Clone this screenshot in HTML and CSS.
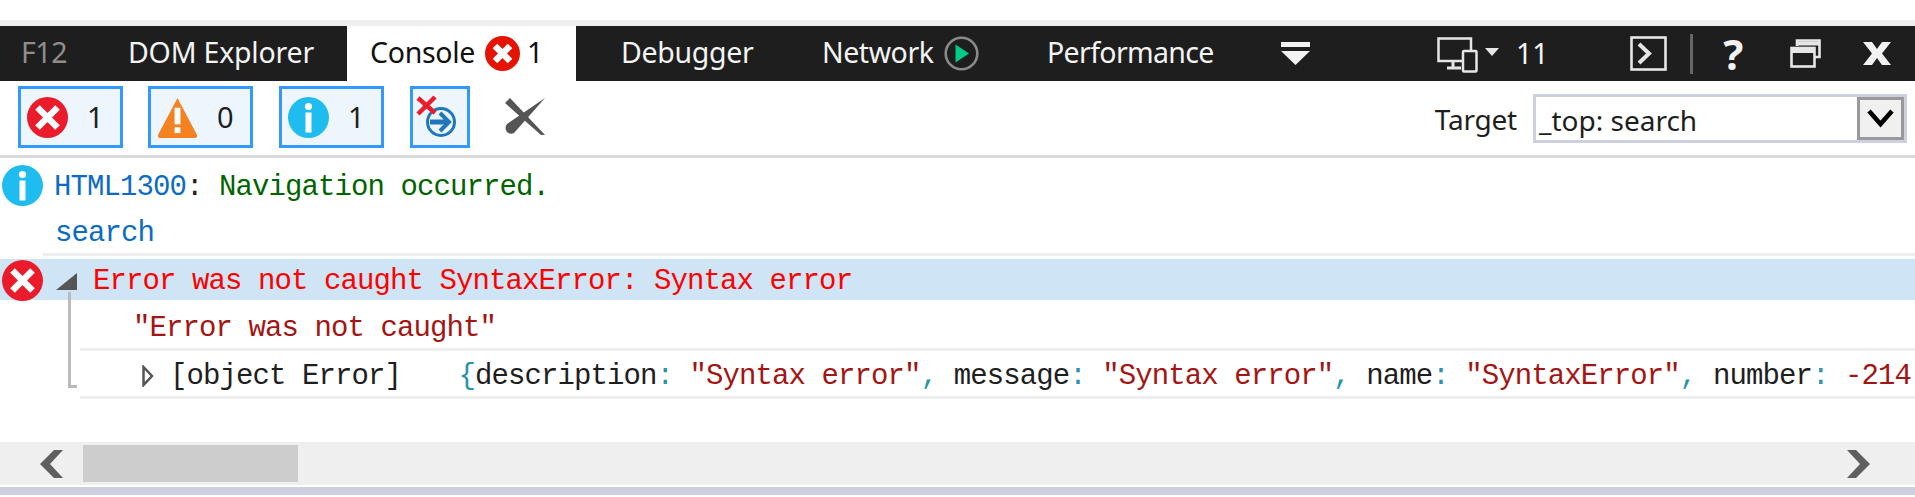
FILE: index.html
```html
<!DOCTYPE html>
<html lang="en">
<head>
<meta charset="utf-8">
<title>F12 Console</title>
<link rel="stylesheet" href="styles.css">
</head>
<body>
<svg class="defs" width="0" height="0" aria-hidden="true">
  <symbol id="err" viewBox="0 0 41 41"><circle cx="20.5" cy="20.5" r="20.5" fill="#ea1c2c"/><path d="M10.500 10.500 30.500 30.500M30.500 10.500 10.500 30.500" stroke="#fff" stroke-width="6.500" fill="none"/></symbol>
  <symbol id="info" viewBox="0 0 41 41"><circle cx="20.5" cy="20.5" r="20.5" fill="#1fbcef"/><circle cx="20.5" cy="9.5" r="3.6" fill="#fff"/><rect x="17.5" y="15.5" width="6" height="20" fill="#fff"/></symbol>
</svg>
<div class="spacer"></div>
<header class="tabs">
  <div class="tab t-f12">F12</div>
  <div class="tab t-dom">DOM Explorer</div>
  <div class="tab t-console active">Console
    <svg class="tab-badge" viewBox="0 0 35 35"><circle cx="17.5" cy="17.5" r="17.5" fill="#e51400"/><path d="M10 10 25 25M25 10 10 25" stroke="#fff" stroke-width="6.500" fill="none"/></svg>
    <span class="tab-count">1</span></div>
  <div class="tab t-debugger">Debugger</div>
  <div class="tab t-network">Network
    <svg class="tab-badge" viewBox="0 0 35 35"><circle cx="17.5" cy="17.5" r="15.8" fill="none" stroke="#8a8a8a" stroke-width="2.6"/><path d="M11.5 8.5 25 17.5 11.5 26.5Z" fill="#00cc88"/></svg></div>
  <div class="tab t-perf">Performance</div>
  <svg class="more" viewBox="0 0 29 23"><rect x="0" y="0" width="29" height="5" fill="#f2f2f2"/><path d="M0 9H29L14.5 23Z" fill="#f2f2f2"/></svg>
  <div class="tab-tools">
    <svg class="device" viewBox="0 0 41 36" fill="none" stroke="#e6e6e6" stroke-width="2.5"><path d="M25 24H1.5V1.5H34V13"/><path d="M16 24V31M10 31H24" stroke-width="3"/><rect x="26" y="14" width="13.5" height="20.5" rx="1" fill="#1e1e1e"/></svg>
    <span class="caret"></span>
    <span class="mode">11</span>
    <svg class="prompt" viewBox="0 0 37 35" fill="none" stroke="#e6e6e6"><rect x="1.5" y="1.5" width="34" height="32" stroke-width="2.6"/><path d="M9 8 19 17.5 9 27" stroke-width="4"/></svg>
    <span class="sep"></span>
    <span class="glyph help">?</span>
    <svg class="restore" viewBox="0 0 31 29" fill="none" stroke="#e6e6e6" stroke-width="2.6"><path d="M7 7V1.5H29.5V18H24"/><path d="M7 4.5H29.5" stroke-width="4"/><rect x="1.5" y="9" width="23" height="18.5"/><path d="M1.5 12H24.5" stroke-width="4"/></svg>
    <svg class="closer" viewBox="0 0 28 23"><path d="M0 0H9L14 7 19 0H28L19 11.500 28 23H19L14 16 9 23H0L9 11.500Z" fill="#f2f2f2"/></svg>
  </div>
</header>
<section class="toolbar">
  <button class="filter first"><svg class="ficon"><use href="#err"/></svg><span>1</span></button>
  <button class="filter"><svg class="ficon" viewBox="0 0 42 42"><path d="M21 1 41 39Q41.500 42 39 42H3Q.5 42 1 39Z" fill="#f58220"/><rect x="18" y="11" width="6" height="17" fill="#fff"/><rect x="18" y="31" width="6" height="6" fill="#fff"/></svg><span>0</span></button>
  <button class="filter"><svg class="ficon"><use href="#info"/></svg><span>1</span></button>
  <button class="filter small"><svg class="clear-nav" viewBox="0 0 44 44" fill="none"><circle cx="25" cy="27" r="13.500" stroke="#1e76bd" stroke-width="3"/><path d="M14 27H30" stroke="#1e76bd" stroke-width="5"/><path d="M24 18 33 27 24 36" stroke="#1e76bd" stroke-width="4"/><path d="M2 3 19 18M19 2 2 19" stroke="#ea1c2c" stroke-width="4.500"/></svg></button>
  <svg class="clear" viewBox="0 0 40 37"><path d="M40 0 2 26Q-1 30 2 34 5 37 9 35Z" fill="#555"/><path d="M0 5 5 0 40 37H36Z" fill="#555"/></svg>
  <label class="target">Target</label>
  <div class="select"><span>_top: search</span><span class="select-btn"><svg viewBox="0 0 27 19" fill="none"><path d="M2 2 13.500 15 25 2" stroke="#000" stroke-width="4.500"/></svg></span></div>
</section>
<main class="console">
  <div class="group">
    <svg class="gicon"><use href="#info"/></svg>
    <div class="gbody">
      <div class="line l1"><span class="blue">HTML1300</span>: <span class="green">Navigation occurred.</span></div>
      <div class="line l2"><span class="blue">search</span></div>
    </div>
  </div>
  <div class="group err">
    <svg class="gicon"><use href="#err"/></svg>
    <div class="gbody">
      <div class="errhead"><svg class="tri-open" viewBox="0 0 21 17"><path d="M21 0V17H0Z" fill="#555"/></svg><span class="red">Error was not caught SyntaxError: Syntax error</span></div>
    </div>
  </div>
  <div class="tree">
    <div class="line child c1"><span class="str">"Error was not caught"</span></div>
    <div class="line child c2"><svg class="tri-closed" viewBox="0 0 12 22" fill="none"><path d="M1.500 2 10 11 1.500 20Z" stroke="#555" stroke-width="2.500"/></svg><span class="plain">[object Error]</span><span class="obj"><span class="p">{</span>description<span class="p">:</span> <span class="str">"Syntax error"</span><span class="p">,</span> message<span class="p">:</span> <span class="str">"Syntax error"</span><span class="p">,</span> name<span class="p">:</span> <span class="str">"SyntaxError"</span><span class="p">,</span> number<span class="p">:</span> <span class="str">-214</span></span></div>
  </div>
</main>
<div class="hscroll">
  <svg class="arrow" viewBox="0 0 23 28"><path d="M23 0H14L0 14 14 28H23L10 14Z" fill="#5f5f5f"/></svg>
  <div class="thumb"></div>
  <svg class="arrow right" viewBox="0 0 23 28"><path d="M0 0H9L23 14 9 28H0L13 14Z" fill="#5f5f5f"/></svg>
</div>
<div class="frame-edge"></div>
</body>
</html>
```
FILE: styles.css
```css
* { box-sizing: border-box; }
html, body { margin: 0; padding: 0; }
body { width: 1915px; height: 497px; overflow: hidden; background: #fff; font-family: "Noto Sans", sans-serif; color: #1e1e1e; }
.defs { position: absolute; }
.spacer { height: 20px; }

.tabs { height: 61px; border-top: 6px solid #efefef; background: #1e1e1e; display: flex; align-items: center; color: #f4f4f4; font-size: 28.5px; letter-spacing: -0.45px; }
.tab { height: 55px; display: flex; align-items: center; white-space: nowrap; flex: none; padding-bottom: 4px; }
.t-f12 { width: 128px; padding-left: 21px; color: #8e8e8e; }
.t-dom { width: 219px; letter-spacing: -0.2px; }
.t-console { width: 229px; padding-left: 23px; background: #fff; color: #111; letter-spacing: -0.3px; }
.t-debugger { width: 201px; margin-left: 45px; letter-spacing: -0.3px; }
.t-network { width: 225px; }
.t-perf { width: 234px; letter-spacing: -0.65px; }
.tab-badge { width: 35px; height: 35px; margin-left: 10px; flex: none; margin-top: 4px; }
.tab-count { margin-left: 7px; }
.more { width: 29px; height: 23px; flex: none; }
.tab-tools { margin-left: 127px; display: flex; align-items: center; height: 55px; }
.device { width: 41px; height: 36px; flex: none; margin-top: 2px; }
.caret { width: 0; height: 0; border: 7px solid transparent; border-top: 8px solid #e6e6e6; border-bottom: 0; margin-left: 7px; margin-top: -4px; }
.mode { margin-left: 17px; width: 114px; padding-bottom: 2px; letter-spacing: 0; }
.prompt { width: 37px; height: 35px; flex: none; }
.sep { width: 3px; height: 40px; background: #666; margin-left: 23px; }
.help { font-weight: 700; font-size: 42px; line-height: 1; width: 24px; margin-left: 28px; color: #f2f2f2; text-align: center; }
.restore { width: 31px; height: 29px; margin-left: 45px; flex: none; }
.closer { width: 28px; height: 23px; margin-left: 42px; flex: none; }

.toolbar { height: 77px; border-bottom: 3px solid #d9d9d9; display: flex; align-items: flex-start; padding: 5px 8px 0 18px; }
.filter { width: 105px; height: 62px; margin: 0 26px 0 0; padding: 0 0 0 6px; border: 3px solid #3399ff; background: #eef6fd; display: flex; align-items: center; font: 29px "Noto Sans", sans-serif; color: #1e1e1e; }
.first { margin-right: 25px; }
.filter span { margin: 0 0 2px 19px; }
.ficon { width: 41px; height: 41px; flex: none; }
.small { width: 60px; padding: 0; }
.clear-nav { width: 44px; height: 44px; margin: 0 0 0 3px; }
.clear { width: 40px; height: 37px; margin: 12px 0 0 9px; flex: none; }
.target { margin: 14px 16px 0 auto; font-size: 28px; letter-spacing: -0.2px; }
.select { width: 374px; height: 49px; margin-top: 8px; border: 3px solid #ccd0e0; display: flex; justify-content: space-between; font-size: 28px; line-height: 46px; padding-left: 3px; }
.select-btn { width: 47px; height: 43px; border: 3px solid #999; background: #f0f0f0; display: flex; align-items: center; justify-content: center; }
.select-btn svg { width: 27px; height: 19px; }

.console { height: 284px; overflow: hidden; font-family: "Liberation Mono", monospace; font-size: 29px; letter-spacing: -0.9px; }
.group { display: flex; }
.gicon { width: 41px; height: 41px; margin: 7px 0 0 2px; flex: none; }
.gbody { flex: 1; min-width: 0; }
.line { white-space: pre; }
.l1 { height: 47px; line-height: 60px; padding-left: 11px; }
.l2 { height: 51px; line-height: 58px; padding-left: 12px; border-bottom: 3px solid #eee; }
.err { height: 41px; margin-top: 3px; background: #cfe5f5; }
.err .gicon { margin-top: 1px; margin-left: 2px; }
.errhead { display: flex; align-items: center; height: 41px; padding: 0 0 0 13px; }
.errhead .red { padding-top: 4px; margin-left: -1px; }
.tri-open { width: 21px; height: 17px; margin: 4px 17px 0 0; flex: none; }
.blue { color: #0c6cc4; }
.green { color: #006400; }
.red { color: #ff0000; }
.str { color: #a31515; }
.p { color: #2b91af; }

.tree { position: relative; margin: 0 0 0 68px; padding-left: 12px; height: 99px; }
.tree::before { content: ""; position: absolute; left: 0; top: -8px; bottom: 11px; width: 3px; background: #bbb; }
.tree::after { content: ""; position: absolute; left: 0; bottom: 11px; width: 9px; height: 3px; background: #bbb; }
.child { border-bottom: 3px solid #eee; display: flex; align-items: center; }
.c1 { height: 51px; padding: 9px 0 0 53px; }
.c2 { height: 48px; padding: 5px 0 0 62px; }
.tri-closed { width: 12px; height: 22px; margin-right: 16px; flex: none; }
.plain { width: 288.500px; flex: none; }

.hscroll { height: 43px; background: #efefef; display: flex; align-items: center; }
.arrow { width: 23px; height: 28px; margin-left: 40px; flex: none; }
.thumb { width: 215px; height: 37px; margin-left: 20px; background: #cdcdcd; }
.arrow.right { margin-left: auto; margin-right: 45px; }
.frame-edge { height: 8px; margin-top: 2px; background: #ccd0e0; }
```
